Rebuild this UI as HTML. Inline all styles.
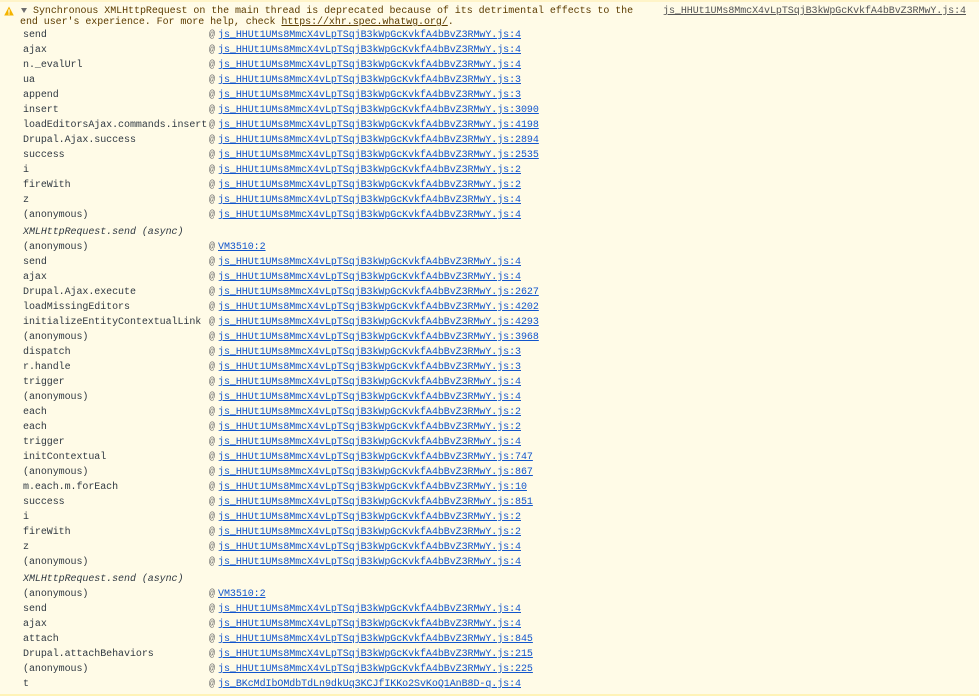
<!DOCTYPE html>
<html>
<head>
<meta charset="utf-8">
<style>
html,body{margin:0;padding:0}
body{width:979px;height:696px;overflow:hidden;background:#fffbe7;position:relative;font-family:"Liberation Mono",monospace;font-size:10px;letter-spacing:-.06px;color:#303942}
#top{position:absolute;left:0;top:0;width:979px;height:2px;background:#fff4c8}
#bot{position:absolute;left:0;top:694px;width:979px;height:2px;background:#fff3b8}
.msg{position:absolute;left:0;white-space:pre;color:#5c3c00;line-height:11px;height:11px}
.msg a{color:#5c3c00;text-decoration:underline}
#src{position:absolute;left:663px;top:6px;line-height:11px;color:#545454;text-decoration:underline}
#rows{position:absolute;left:0;top:28px;width:979px}
.r{height:15px;line-height:15px;position:relative;white-space:pre}
.r b{font-weight:normal;position:absolute;left:23px;top:0}
.r i{font-style:normal;position:absolute;left:209px;top:0;color:#6b6b6b}
.r a{position:absolute;left:218px;top:0;color:#1155cc;text-decoration:underline}
.x{height:15px;line-height:15px;margin-top:2px;padding-left:23px;font-style:italic;white-space:pre}
</style>
</head>
<body>
<div id="top"></div>
<svg style="position:absolute;left:4px;top:6px" width="10" height="10" viewBox="0 0 10 10"><path d="M5 .5L9.8 9.5H.2z" fill="#f4b400"/><rect x="4.4" y="3.4" width="1.2" height="3.4" fill="#fff"/><rect x="4.4" y="7.4" width="1.2" height="1.2" fill="#fff"/></svg>
<svg style="position:absolute;left:21px;top:8px" width="6" height="5" viewBox="0 0 6 5"><path d="M0 0H6L3 5z" fill="#6e6e6e"/></svg>
<div class="msg" style="top:6px;left:33px">Synchronous XMLHttpRequest on the main thread is deprecated because of its detrimental effects to the</div>
<div class="msg" style="top:17px;left:20px">end user's experience. For more help, check <a>https://xhr.spec.whatwg.org/</a>.</div>
<div id="src">js_HHUt1UMs8MmcX4vLpTSqjB3kWpGcKvkfA4bBvZ3RMwY.js:4</div>
<div id="rows">
<div class="r"><b>send</b><i>@</i><a>js_HHUt1UMs8MmcX4vLpTSqjB3kWpGcKvkfA4bBvZ3RMwY.js:4</a></div>
<div class="r"><b>ajax</b><i>@</i><a>js_HHUt1UMs8MmcX4vLpTSqjB3kWpGcKvkfA4bBvZ3RMwY.js:4</a></div>
<div class="r"><b>n._evalUrl</b><i>@</i><a>js_HHUt1UMs8MmcX4vLpTSqjB3kWpGcKvkfA4bBvZ3RMwY.js:4</a></div>
<div class="r"><b>ua</b><i>@</i><a>js_HHUt1UMs8MmcX4vLpTSqjB3kWpGcKvkfA4bBvZ3RMwY.js:3</a></div>
<div class="r"><b>append</b><i>@</i><a>js_HHUt1UMs8MmcX4vLpTSqjB3kWpGcKvkfA4bBvZ3RMwY.js:3</a></div>
<div class="r"><b>insert</b><i>@</i><a>js_HHUt1UMs8MmcX4vLpTSqjB3kWpGcKvkfA4bBvZ3RMwY.js:3090</a></div>
<div class="r"><b>loadEditorsAjax.commands.insert</b><i>@</i><a>js_HHUt1UMs8MmcX4vLpTSqjB3kWpGcKvkfA4bBvZ3RMwY.js:4198</a></div>
<div class="r"><b>Drupal.Ajax.success</b><i>@</i><a>js_HHUt1UMs8MmcX4vLpTSqjB3kWpGcKvkfA4bBvZ3RMwY.js:2894</a></div>
<div class="r"><b>success</b><i>@</i><a>js_HHUt1UMs8MmcX4vLpTSqjB3kWpGcKvkfA4bBvZ3RMwY.js:2535</a></div>
<div class="r"><b>i</b><i>@</i><a>js_HHUt1UMs8MmcX4vLpTSqjB3kWpGcKvkfA4bBvZ3RMwY.js:2</a></div>
<div class="r"><b>fireWith</b><i>@</i><a>js_HHUt1UMs8MmcX4vLpTSqjB3kWpGcKvkfA4bBvZ3RMwY.js:2</a></div>
<div class="r"><b>z</b><i>@</i><a>js_HHUt1UMs8MmcX4vLpTSqjB3kWpGcKvkfA4bBvZ3RMwY.js:4</a></div>
<div class="r"><b>(anonymous)</b><i>@</i><a>js_HHUt1UMs8MmcX4vLpTSqjB3kWpGcKvkfA4bBvZ3RMwY.js:4</a></div>
<div class="x">XMLHttpRequest.send (async)</div>
<div class="r"><b>(anonymous)</b><i>@</i><a>VM3510:2</a></div>
<div class="r"><b>send</b><i>@</i><a>js_HHUt1UMs8MmcX4vLpTSqjB3kWpGcKvkfA4bBvZ3RMwY.js:4</a></div>
<div class="r"><b>ajax</b><i>@</i><a>js_HHUt1UMs8MmcX4vLpTSqjB3kWpGcKvkfA4bBvZ3RMwY.js:4</a></div>
<div class="r"><b>Drupal.Ajax.execute</b><i>@</i><a>js_HHUt1UMs8MmcX4vLpTSqjB3kWpGcKvkfA4bBvZ3RMwY.js:2627</a></div>
<div class="r"><b>loadMissingEditors</b><i>@</i><a>js_HHUt1UMs8MmcX4vLpTSqjB3kWpGcKvkfA4bBvZ3RMwY.js:4202</a></div>
<div class="r"><b>initializeEntityContextualLink</b><i>@</i><a>js_HHUt1UMs8MmcX4vLpTSqjB3kWpGcKvkfA4bBvZ3RMwY.js:4293</a></div>
<div class="r"><b>(anonymous)</b><i>@</i><a>js_HHUt1UMs8MmcX4vLpTSqjB3kWpGcKvkfA4bBvZ3RMwY.js:3968</a></div>
<div class="r"><b>dispatch</b><i>@</i><a>js_HHUt1UMs8MmcX4vLpTSqjB3kWpGcKvkfA4bBvZ3RMwY.js:3</a></div>
<div class="r"><b>r.handle</b><i>@</i><a>js_HHUt1UMs8MmcX4vLpTSqjB3kWpGcKvkfA4bBvZ3RMwY.js:3</a></div>
<div class="r"><b>trigger</b><i>@</i><a>js_HHUt1UMs8MmcX4vLpTSqjB3kWpGcKvkfA4bBvZ3RMwY.js:4</a></div>
<div class="r"><b>(anonymous)</b><i>@</i><a>js_HHUt1UMs8MmcX4vLpTSqjB3kWpGcKvkfA4bBvZ3RMwY.js:4</a></div>
<div class="r"><b>each</b><i>@</i><a>js_HHUt1UMs8MmcX4vLpTSqjB3kWpGcKvkfA4bBvZ3RMwY.js:2</a></div>
<div class="r"><b>each</b><i>@</i><a>js_HHUt1UMs8MmcX4vLpTSqjB3kWpGcKvkfA4bBvZ3RMwY.js:2</a></div>
<div class="r"><b>trigger</b><i>@</i><a>js_HHUt1UMs8MmcX4vLpTSqjB3kWpGcKvkfA4bBvZ3RMwY.js:4</a></div>
<div class="r"><b>initContextual</b><i>@</i><a>js_HHUt1UMs8MmcX4vLpTSqjB3kWpGcKvkfA4bBvZ3RMwY.js:747</a></div>
<div class="r"><b>(anonymous)</b><i>@</i><a>js_HHUt1UMs8MmcX4vLpTSqjB3kWpGcKvkfA4bBvZ3RMwY.js:867</a></div>
<div class="r"><b>m.each.m.forEach</b><i>@</i><a>js_HHUt1UMs8MmcX4vLpTSqjB3kWpGcKvkfA4bBvZ3RMwY.js:10</a></div>
<div class="r"><b>success</b><i>@</i><a>js_HHUt1UMs8MmcX4vLpTSqjB3kWpGcKvkfA4bBvZ3RMwY.js:851</a></div>
<div class="r"><b>i</b><i>@</i><a>js_HHUt1UMs8MmcX4vLpTSqjB3kWpGcKvkfA4bBvZ3RMwY.js:2</a></div>
<div class="r"><b>fireWith</b><i>@</i><a>js_HHUt1UMs8MmcX4vLpTSqjB3kWpGcKvkfA4bBvZ3RMwY.js:2</a></div>
<div class="r"><b>z</b><i>@</i><a>js_HHUt1UMs8MmcX4vLpTSqjB3kWpGcKvkfA4bBvZ3RMwY.js:4</a></div>
<div class="r"><b>(anonymous)</b><i>@</i><a>js_HHUt1UMs8MmcX4vLpTSqjB3kWpGcKvkfA4bBvZ3RMwY.js:4</a></div>
<div class="x">XMLHttpRequest.send (async)</div>
<div class="r"><b>(anonymous)</b><i>@</i><a>VM3510:2</a></div>
<div class="r"><b>send</b><i>@</i><a>js_HHUt1UMs8MmcX4vLpTSqjB3kWpGcKvkfA4bBvZ3RMwY.js:4</a></div>
<div class="r"><b>ajax</b><i>@</i><a>js_HHUt1UMs8MmcX4vLpTSqjB3kWpGcKvkfA4bBvZ3RMwY.js:4</a></div>
<div class="r"><b>attach</b><i>@</i><a>js_HHUt1UMs8MmcX4vLpTSqjB3kWpGcKvkfA4bBvZ3RMwY.js:845</a></div>
<div class="r"><b>Drupal.attachBehaviors</b><i>@</i><a>js_HHUt1UMs8MmcX4vLpTSqjB3kWpGcKvkfA4bBvZ3RMwY.js:215</a></div>
<div class="r"><b>(anonymous)</b><i>@</i><a>js_HHUt1UMs8MmcX4vLpTSqjB3kWpGcKvkfA4bBvZ3RMwY.js:225</a></div>
<div class="r"><b>t</b><i>@</i><a>js_BKcMdIbOMdbTdLn9dkUq3KCJfIKKo2SvKoQ1AnB8D-q.js:4</a></div>
</div>
<div id="bot"></div>
</body>
</html>
